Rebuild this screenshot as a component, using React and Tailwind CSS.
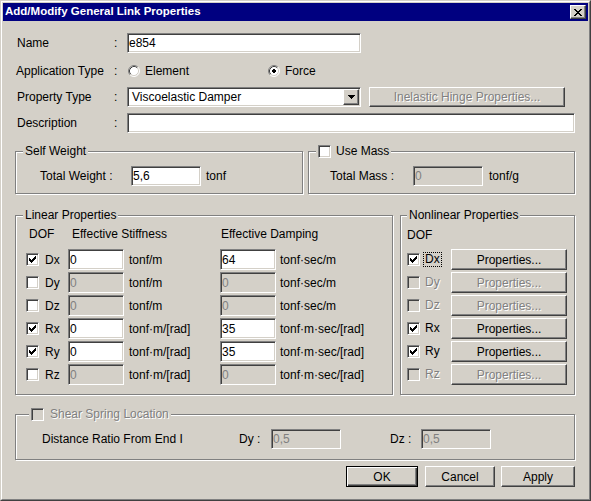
import React from "react";

const edit =
  "border border-t-[#808080] border-l-[#808080] border-r-white border-b-white shadow-[inset_1px_1px_0_#404040,inset_-1px_-1px_0_#d4d0c8]";
const raised =
  "border border-t-white border-l-white border-r-[#404040] border-b-[#404040] shadow-[inset_-1px_-1px_0_#808080]";
const emboss = "text-[#808080] [text-shadow:1px_1px_0_#ffffff]";

function Edit({ value = "", disabled = false, className = "" }) {
  return (
    <div
      className={`${edit} ${
        disabled ? "bg-[#d4d0c8] text-[#808080]" : "bg-white text-black"
      } flex items-center pl-[1px] overflow-hidden whitespace-nowrap shrink-0 ${className}`}
    >
      {value}
    </div>
  );
}

function Check({ checked = false, disabled = false }) {
  return (
    <div
      className={`${edit} w-[13px] h-[13px] shrink-0 ${
        disabled ? "bg-[#d4d0c8]" : "bg-white"
      }`}
    >
      {checked && (
        <svg width="11" height="11" viewBox="0 0 11 11" shapeRendering="crispEdges" className="block">
          {[2, 3, 4, 3, 2, 1, 0].map((s, i) => (
            <rect key={i} x={2 + i} y={2 + s} width="1" height="3" fill="#000" />
          ))}
        </svg>
      )}
    </div>
  );
}

function Radio({ checked = false }) {
  return (
    <svg width="12" height="12" viewBox="0 0 12 12" className="shrink-0 block">
      <circle cx="6" cy="6" r="5" fill="#fff" />
      <path d="M2.11 9.89 A5.5 5.5 0 0 1 9.89 2.11" fill="none" stroke="#808080" strokeWidth="1" />
      <path d="M9.89 2.11 A5.5 5.5 0 0 1 2.11 9.89" fill="none" stroke="#ffffff" strokeWidth="1" />
      <path d="M2.82 9.18 A4.5 4.5 0 0 1 9.18 2.82" fill="none" stroke="#404040" strokeWidth="1" />
      <path d="M9.18 2.82 A4.5 4.5 0 0 1 2.82 9.18" fill="none" stroke="#d4d0c8" strokeWidth="1" />
      {checked && (
        <g shapeRendering="crispEdges" fill="#000">
          <rect x="5" y="4" width="2" height="1" />
          <rect x="4" y="5" width="4" height="2" />
          <rect x="5" y="7" width="2" height="1" />
        </g>
      )}
    </svg>
  );
}

function Button({ children, disabled = false, isDefault = false, className = "" }) {
  const frame = isDefault
    ? "border border-black shadow-[inset_1px_1px_0_#ffffff,inset_-1px_-1px_0_#404040,inset_-2px_-2px_0_#808080]"
    : raised;
  return (
    <div
      className={`${frame} bg-[#d4d0c8] flex items-center justify-center whitespace-nowrap shrink-0 ${
        disabled ? emboss : "text-black"
      } ${className}`}
    >
      {children}
    </div>
  );
}

function Group({ label, className = "", labelClass = "left-[7px]", children }) {
  return (
    <div
      className={`relative border border-[#808080] shadow-[inset_1px_1px_0_#ffffff,1px_1px_0_#ffffff] ${className}`}
    >
      <div
        className={`absolute top-[-8px] ${labelClass} px-[2px] bg-[#d4d0c8] h-[14px] flex items-center whitespace-nowrap`}
      >
        {label}
      </div>
      {children}
    </div>
  );
}

const linearRows = [
  { dof: "Dx", checked: true, dis: false, s: "0", su: "tonf/m", d: "64", du: "tonf·sec/m" },
  { dof: "Dy", checked: false, dis: true, s: "0", su: "tonf/m", d: "0", du: "tonf·sec/m" },
  { dof: "Dz", checked: false, dis: true, s: "0", su: "tonf/m", d: "0", du: "tonf·sec/m" },
  { dof: "Rx", checked: true, dis: false, s: "0", su: "tonf·m/[rad]", d: "35", du: "tonf·m·sec/[rad]" },
  { dof: "Ry", checked: true, dis: false, s: "0", su: "tonf·m/[rad]", d: "35", du: "tonf·m·sec/[rad]" },
  { dof: "Rz", checked: false, dis: true, s: "0", su: "tonf·m/[rad]", d: "0", du: "tonf·m·sec/[rad]" },
];

const nonRows = [
  { dof: "Dx", checked: true, dis: false, focus: true },
  { dof: "Dy", checked: false, dis: true },
  { dof: "Dz", checked: false, dis: true },
  { dof: "Rx", checked: true, dis: false },
  { dof: "Ry", checked: true, dis: false },
  { dof: "Rz", checked: false, dis: true },
];

export default function App() {
  return (
    <div className="w-[591px] h-[501px] bg-[#d4d0c8] border border-t-[#d4d0c8] border-l-[#d4d0c8] border-r-[#404040] border-b-[#404040] font-['Liberation_Sans',Arial,sans-serif] text-[12px] text-black select-none">
      <div className="h-full border border-t-white border-l-white border-r-[#808080] border-b-[#808080] p-px flex flex-col">
        {/* Title bar */}
        <div className="h-[18px] bg-[#000080] flex items-center pl-[2px] pr-[2px] shrink-0">
          <div className="flex-1 text-white font-bold text-[11.5px] whitespace-nowrap">
            Add/Modify General Link Properties
          </div>
          <div className={`${raised} bg-[#d4d0c8] w-[16px] h-[14px] flex items-center justify-center`}>
            <svg width="8" height="7" viewBox="0 0 8 7" shapeRendering="crispEdges" className="block">
              {[0, 1, 2, 3, 4, 5, 6].map((r) => {
                if (r === 3) return <rect key={r} x="3" y="3" width="2" height="1" fill="#000" />;
                const a = Math.min(r, 6 - r);
                return (
                  <g key={r} fill="#000">
                    <rect x={a} y={r} width="2" height="1" />
                    <rect x={6 - a} y={r} width="2" height="1" />
                  </g>
                );
              })}
            </svg>
          </div>
        </div>

        {/* Content */}
        <div className="flex-1 pl-[12px] pr-[13px] pt-[12px] flex flex-col">
          {/* Name */}
          <div className="flex items-center h-[20px]">
            <div className="ml-[2px] w-[97px]">Name</div>
            <div className="w-[13px]">:</div>
            <Edit value="e854" className="w-[234px] h-[20px]" />
          </div>
          {/* Application type */}
          <div className="flex items-center h-[20px] mt-[8px]">
            <div className="ml-[1px] w-[98px] whitespace-nowrap">Application Type</div>
            <div className="w-[13px]">:</div>
            <div className="w-[141px] flex items-center">
              <div className="ml-[1px]">
                <Radio />
              </div>
              <span className="ml-[5px]">Element</span>
            </div>
            <Radio checked />
            <span className="ml-[5px]">Force</span>
          </div>
          {/* Property type */}
          <div className="flex items-center h-[20px] mt-[6px]">
            <div className="ml-[2px] w-[97px]">Property Type</div>
            <div className="w-[13px]">:</div>
            <div className={`${edit} bg-white w-[234px] h-[20px] p-px flex items-center shrink-0`}>
              <div className="flex-1 pl-[3px] whitespace-nowrap">Viscoelastic Damper</div>
              <div className={`${raised} bg-[#d4d0c8] w-[16px] h-[16px] flex items-center justify-center`}>
                <svg width="7" height="4" viewBox="0 0 7 4" shapeRendering="crispEdges" className="block">
                  <rect x="0" y="0" width="7" height="1" fill="#000" />
                  <rect x="1" y="1" width="5" height="1" fill="#000" />
                  <rect x="2" y="2" width="3" height="1" fill="#000" />
                  <rect x="3" y="3" width="1" height="1" fill="#000" />
                </svg>
              </div>
            </div>
            <Button disabled className="ml-[8px] w-[196px] h-[20px]">
              Inelastic Hinge Properties...
            </Button>
          </div>
          {/* Description */}
          <div className="flex items-center h-[20px] mt-[6px]">
            <div className="ml-[2px] w-[97px]">Description</div>
            <div className="w-[13px]">:</div>
            <Edit className="flex-1 h-[20px]" />
          </div>

          {/* Self weight / Use mass */}
          <div className="flex mt-[18px]">
            <Group label="Self Weight" className="w-[288px] h-[43px] flex items-center pl-[24px] pt-[6px]">
              <div className="w-[91px] whitespace-nowrap">Total Weight :</div>
              <Edit value="5,6" className="w-[70px] h-[20px]" />
              <span className="ml-[5px]">tonf</span>
            </Group>
            <Group
              label={
                <div className="flex items-center gap-[5px]">
                  <Check />
                  <span>Use Mass</span>
                </div>
              }
              className="ml-[5px] flex-1 h-[43px] flex items-center pl-[21px] pt-[6px]"
            >
              <div className="w-[83px] whitespace-nowrap">Total Mass :</div>
              <Edit value="0" disabled className="w-[70px] h-[20px]" />
              <span className="ml-[6px]">tonf/g</span>
            </Group>
          </div>

          {/* Linear / Nonlinear */}
          <div className="flex mt-[21px]">
            <Group label="Linear Properties" className="w-[378px] h-[180px] pl-[10px] pt-[10px]">
              <div className="flex items-center h-[16px] ml-[3px] whitespace-nowrap">
                <div className="w-[43px]">DOF</div>
                <div className="w-[149px]">Effective Stiffness</div>
                <div>Effective Damping</div>
              </div>
              <div className="flex flex-col gap-[2px] mt-[7px]">
                {linearRows.map((r) => (
                  <div key={r.dof} className="flex items-center h-[21px] whitespace-nowrap">
                    <Check checked={r.checked} />
                    <div className="ml-[6px] w-[23px]">{r.dof}</div>
                    <Edit value={r.s} disabled={r.dis} className="w-[56px] h-[21px]" />
                    <div className="ml-[5px] w-[91px]">{r.su}</div>
                    <Edit value={r.d} disabled={r.dis} className="w-[56px] h-[21px]" />
                    <div className="ml-[4px]">{r.du}</div>
                  </div>
                ))}
              </div>
            </Group>
            <Group
              label="Nonlinear Properties"
              labelClass="left-[6px]"
              className="ml-[7px] flex-1 h-[180px] pl-[6px] pt-[11px]"
            >
              <div className="flex items-center h-[16px]">DOF</div>
              <div className="flex flex-col gap-[2px] mt-[6px]">
                {nonRows.map((r) => (
                  <div key={r.dof} className="flex items-center h-[21px] whitespace-nowrap">
                    <Check checked={r.checked} disabled={r.dis} />
                    <div className="ml-[3px] w-[28px] flex">
                      <span
                        className={`border ${
                          r.focus ? "border-dotted border-black" : "border-transparent"
                        } px-[1px] leading-[13px] ${r.dis ? emboss : ""}`}
                      >
                        {r.dof}
                      </span>
                    </div>
                    <Button disabled={r.dis} className="w-[116px] h-[21px]">
                      Properties...
                    </Button>
                  </div>
                ))}
              </div>
            </Group>
          </div>

          {/* Shear spring */}
          <Group
            label={
              <div className="flex items-center gap-[6px]">
                <Check disabled />
                <span className={emboss}>Shear Spring Location</span>
              </div>
            }
            labelClass="left-[13px]"
            className="mt-[19px] h-[46px] flex items-center pl-[26px] pt-[4px] whitespace-nowrap"
          >
            <div className="w-[197px]">Distance Ratio From End I</div>
            <div className="w-[32px]">Dy :</div>
            <Edit value="0,5" disabled className="w-[70px] h-[20px]" />
            <div className="ml-[49px] w-[31px]">Dz :</div>
            <Edit value="0,5" disabled className="w-[70px] h-[20px]" />
          </Group>

          {/* Buttons */}
          <div className="flex justify-end mt-[6px]">
            <Button isDefault className="w-[72px] h-[21px]">
              OK
            </Button>
            <Button className="ml-[7px] w-[70px] h-[21px]">Cancel</Button>
            <Button className="ml-[6px] w-[74px] h-[21px]">Apply</Button>
          </div>
        </div>
      </div>
    </div>
  );
}
